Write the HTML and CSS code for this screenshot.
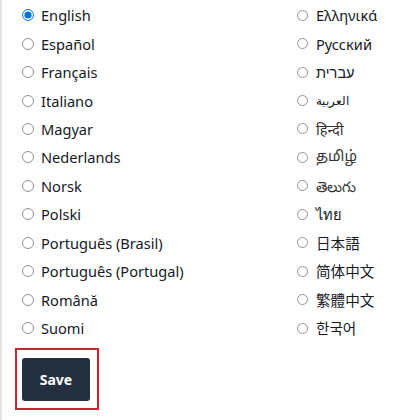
FILE: index.html
```html
<!DOCTYPE html>
<html lang="en">
<head>
<meta charset="utf-8">
<link rel="stylesheet" href="styles.css">
</head>
<body>
<div class="panel">
  <div class="langs">
    <div class="col">
      <label class="opt"><input type="radio" name="lang" checked><span>English</span></label>
      <label class="opt"><input type="radio" name="lang"><span>Español</span></label>
      <label class="opt"><input type="radio" name="lang"><span>Français</span></label>
      <label class="opt"><input type="radio" name="lang"><span>Italiano</span></label>
      <label class="opt"><input type="radio" name="lang"><span>Magyar</span></label>
      <label class="opt"><input type="radio" name="lang"><span>Nederlands</span></label>
      <label class="opt"><input type="radio" name="lang"><span>Norsk</span></label>
      <label class="opt"><input type="radio" name="lang"><span>Polski</span></label>
      <label class="opt"><input type="radio" name="lang"><span>Português (Brasil)</span></label>
      <label class="opt"><input type="radio" name="lang"><span>Português (Portugal)</span></label>
      <label class="opt"><input type="radio" name="lang"><span>Română</span></label>
      <label class="opt"><input type="radio" name="lang"><span>Suomi</span></label>
    </div>
    <div class="col right">
      <label class="opt"><input type="radio" name="lang"><span>Ελληνικά</span></label>
      <label class="opt"><input type="radio" name="lang"><span>Русский</span></label>
      <label class="opt"><input type="radio" name="lang"><span lang="he">עברית</span></label>
      <label class="opt"><input type="radio" name="lang"><span lang="ar" class="arabic">العربية</span></label>
      <label class="opt"><input type="radio" name="lang"><span lang="hi" class="indic">हिन्दी</span></label>
      <label class="opt"><input type="radio" name="lang"><span lang="ta" class="tamil">தமிழ்</span></label>
      <label class="opt"><input type="radio" name="lang"><span lang="te" class="indic">తెలుగు</span></label>
      <label class="opt"><input type="radio" name="lang"><span lang="th">ไทย</span></label>
      <label class="opt"><input type="radio" name="lang"><span lang="ja">日本語</span></label>
      <label class="opt"><input type="radio" name="lang"><span lang="zh-CN">简体中文</span></label>
      <label class="opt"><input type="radio" name="lang"><span lang="zh-TW">繁體中文</span></label>
      <label class="opt"><input type="radio" name="lang"><span lang="ko">한국어</span></label>
    </div>
  </div>
  <div class="actions">
    <div class="highlight">
      <button class="save" type="button">Save</button>
    </div>
  </div>
</div>
</body>
</html>
```
FILE: styles.css
```css
html, body {
  margin: 0;
  padding: 0;
  background: #ffffff;
}
body {
  font-family: "Noto Sans", "Noto Sans CJK JP", sans-serif;
  color: #16191f;
  font-size: 14.6px;
}
.panel {
  border-left: 2px solid #e1e3e6;
  min-height: 420px;
  box-sizing: border-box;
  padding-top: 1px;
}
.langs {
  display: grid;
  grid-template-columns: 275px 1fr;
  padding-left: 20px;
}
.col {
  display: flex;
  flex-direction: column;
}
.opt {
  display: flex;
  align-items: center;
  height: 28.45px;
  gap: 7px;
}
.opt input {
  margin: 0;
  width: 12px;
  height: 12px;
  accent-color: #0972d3;
}
.opt input:not(:checked) {
  appearance: none;
  -webkit-appearance: none;
  box-sizing: border-box;
  border: 1px solid #8f9296;
  border-radius: 50%;
  background: #ffffff;
}
.right .opt input {
  width: 11px;
  height: 11px;
}
.right .opt {
  gap: 8px;
}
.opt span {
  line-height: 20px;
}
.arabic {
  font-size: 12px;
}
.indic {
  color: #333333;
}
.tamil {
  font-family: "Noto Sans Tamil", "Lohit Tamil", "Noto Serif Tamil", "FreeSerif", sans-serif;
  color: #333333;
}
.actions {
  padding: 6px 0 0 13px;
}
.highlight {
  display: inline-block;
  border: 2px solid #c8262f;
  padding: 8px 7px 7px 5px;
}
.save {
  display: block;
  width: 68px;
  height: 43px;
  background: #232f3e;
  color: #ffffff;
  border: none;
  border-radius: 3px;
  font-family: "Noto Sans", sans-serif;
  font-weight: 700;
  font-size: 14px;
  padding: 0;
}
```
